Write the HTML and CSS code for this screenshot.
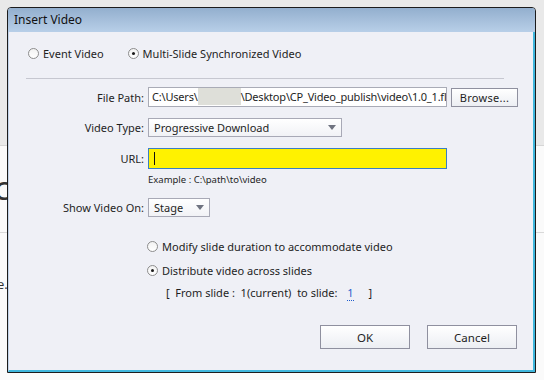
FILE: index.html
```html
<!DOCTYPE html>
<html lang="en">
<head>
    <meta charset="UTF-8">
    <meta name="viewport" content="width=device-width, initial-scale=1.0">
    <title>Insert Video</title>
    <link rel="stylesheet" href="styles.css">
</head>
<body>
    <div class="desktop">
        <div class="desk-top"></div>
        <div class="desk-bottom">
            <div class="peek peek-c">C</div>
            <div class="peek peek-e">e.</div>
        </div>

        <div class="dialog">
            <div class="titlebar">Insert Video</div>
            <div class="frame">
                <div class="mode-row">
                    <label class="radio"><span class="dot"></span>Event Video</label>
                    <label class="radio"><span class="dot checked"></span>Multi-Slide Synchronized Video</label>
                </div>
                <div class="separator"></div>

                <div class="form">
                    <div class="field-label">File Path:</div>
                    <div class="path-row">
                        <div class="textbox path">C:\Users\<span class="redact"></span>\Desktop\CP_Video_publish\video\1.0_1.flv</div>
                        <button class="btn browse">Browse...</button>
                    </div>

                    <div class="field-label">Video Type:</div>
                    <div class="select type">
                        <span class="select-text">Progressive Download</span>
                        <span class="arrow"></span>
                    </div>

                    <div class="field-label">URL:</div>
                    <div class="textbox url"><span class="caret"></span></div>

                    <div class="spacer"></div>
                    <div class="example">Example : C:\path\to\video</div>

                    <div class="field-label show">Show Video On:</div>
                    <div class="select stage">
                        <span class="select-text">Stage</span>
                        <span class="arrow"></span>
                    </div>
                </div>

                <div class="options">
                    <label class="radio"><span class="dot"></span>Modify slide duration to accommodate video</label>
                    <label class="radio"><span class="dot checked"></span>Distribute video across slides</label>
                    <div class="range">[&nbsp;&nbsp;From slide :&nbsp; 1(current)&nbsp; to slide:&nbsp; <span class="slide-link">1</span><span class="close">]</span></div>
                </div>

                <div class="actions">
                    <button class="btn action">OK</button>
                    <button class="btn action">Cancel</button>
                </div>
            </div>
        </div>
    </div>
</body>
</html>
```

FILE: styles.css
```css
body {
    margin: 0;
    padding: 0;
    font-family: 'Noto Sans', sans-serif;
    font-size: 11px;
    color: #1e1e1e;
}

.desktop {
    position: relative;
    width: 544px;
    height: 380px;
    overflow: hidden;
    background-color: #fafafa;
}

.desk-top {
    height: 145px;
    background-color: #e9e9e9;
    border-bottom: 1px solid #d6d6d6;
}

.desk-bottom {
    position: relative;
    height: 234px;
}

.desk-bottom::after {
    content: "";
    position: absolute;
    left: 0;
    right: 0;
    top: 86px;
    border-top: 1px solid #d9d9d9;
}

.peek {
    position: absolute;
    color: #333;
    font-family: 'Open Sans', sans-serif;
}

.peek-c {
    left: -6px;
    top: 26px;
    font-size: 26px;
    font-weight: 600;
}

.peek-e {
    left: -3px;
    top: 129px;
    font-size: 13px;
}

.dialog {
    position: absolute;
    left: 7px;
    top: 7px;
    width: 527px;
    height: 364px;
    border: 1px solid #1c1c1c;
    border-radius: 4px 4px 0 0;
    overflow: hidden;
    display: flex;
    flex-direction: column;
}

.titlebar {
    height: 24px;
    line-height: 24px;
    padding-left: 6px;
    font-size: 12px;
    background: linear-gradient(#93afce, #b8cfe8);
    color: #111;
}

.frame {
    flex: 1;
    background-color: #eff0f6;
    border-left: 1px solid #c4d5ea;
    border-right: 2px solid #3fb6dc;
    border-bottom: 2px solid #3fb6dc;
    padding: 0 0 0 17px;
}

.radio {
    display: flex;
    align-items: center;
    gap: 4px;
}

.dot {
    width: 11px;
    height: 11px;
    border: 1px solid #8d8d8d;
    border-radius: 50%;
    background: linear-gradient(#f2f2f2, #ffffff);
    position: relative;
    box-sizing: border-box;
}

.dot.checked::after {
    content: "";
    position: absolute;
    left: 3px;
    top: 3px;
    width: 3px;
    height: 3px;
    border-radius: 50%;
    background-color: #1a1a1a;
}

.mode-row {
    display: flex;
    gap: 24px;
    margin-top: 13px;
    height: 16px;
    padding-left: 2px;
}

.separator {
    width: 478px;
    margin-top: 17px;
    border-top: 1px solid #c6c7d0;
}

.form {
    display: grid;
    grid-template-columns: 135px auto;
    column-gap: 4px;
    row-gap: 11px;
    align-items: center;
    margin-top: 8px;
    margin-left: -17px;
}

.field-label {
    text-align: right;
}

.path-row {
    display: flex;
    gap: 4px;
    height: 20px;
}

.textbox {
    box-sizing: border-box;
    height: 20px;
    border: 1px solid #a9abb6;
    background-color: #fff;
    padding: 0 3px;
    line-height: 18px;
    white-space: nowrap;
    overflow: hidden;
}

.path {
    width: 299px;
    letter-spacing: -0.2px;
}

.redact {
    display: inline-block;
    width: 43px;
    height: 17px;
    vertical-align: top;
    background-color: #dedfd9;
}

.btn {
    box-sizing: border-box;
    border: 1px solid #8f909f;
    background: linear-gradient(#ffffff, #eceef3);
    font-family: 'Noto Sans', sans-serif;
    font-size: 11px;
    color: #1e1e1e;
    padding: 0;
}

.browse {
    width: 67px;
    height: 19px;
    margin-top: 1px;
    letter-spacing: 0.3px;
}

.select {
    box-sizing: border-box;
    height: 19px;
    border: 1px solid #a8a9b6;
    background: linear-gradient(#ffffff, #f1f2f6);
    display: flex;
    align-items: center;
    justify-content: space-between;
    padding-left: 5px;
}

.type {
    width: 194px;
}

.stage {
    width: 62px;
}

.arrow {
    width: 0;
    height: 0;
    margin-right: 5px;
    border-left: 4px solid transparent;
    border-right: 4px solid transparent;
    border-top: 5px solid #6f7380;
}

.type .arrow {
    box-shadow: -9px 0 0 -8px #dcdde4;
}

.url {
    width: 299px;
    height: 21px;
    border-color: #3b7fc1;
    background-color: #fff200;
    display: flex;
    align-items: center;
    padding-left: 5px;
}

.caret {
    width: 1px;
    height: 13px;
    background-color: #111;
}

.spacer {
    margin-top: -8px;
}

.example {
    font-size: 9.5px;
    margin-top: -8px;
    height: 16px;
    line-height: 16px;
}

.show,
.stage {
    margin-top: -1px;
}

.options {
    margin-left: 121px;
    margin-top: 21px;
    display: flex;
    flex-direction: column;
    gap: 8px;
}

.options .radio {
    height: 16px;
}

.range {
    margin-left: 19px;
    margin-top: -1px;
    white-space: pre;
}

.slide-link {
    color: #1f5ccc;
    border-bottom: 1px dotted #1f5ccc;
    margin-left: 4px;
    margin-right: 15px;
}

.actions {
    display: flex;
    justify-content: flex-end;
    gap: 17px;
    margin-top: 25px;
    padding-right: 16px;
}

.action {
    width: 90px;
    height: 24px;
    font-size: 11.5px;
}
```
